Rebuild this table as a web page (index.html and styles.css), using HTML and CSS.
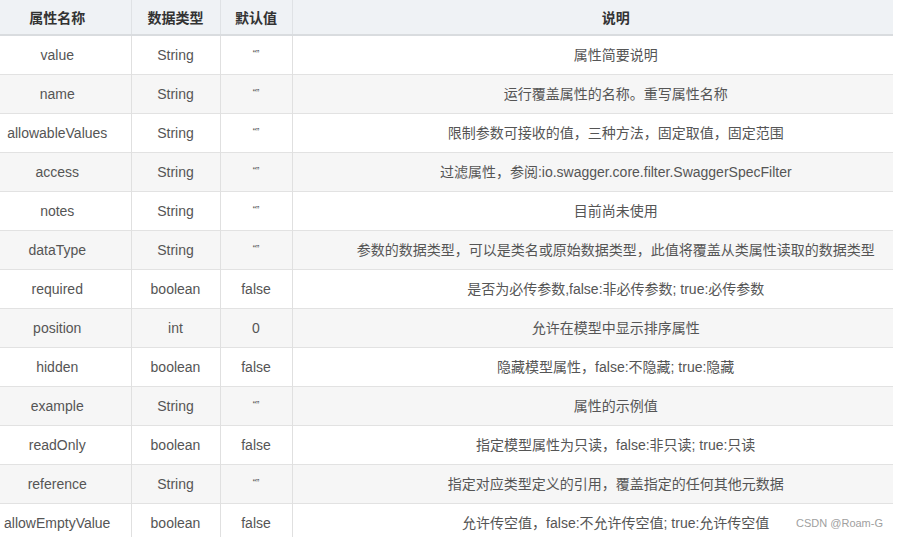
FILE: index.html
```html
<!DOCTYPE html>
<html lang="zh-CN">
<head>
<meta charset="utf-8">
<title>ApiModelProperty</title>
<link rel="stylesheet" href="styles.css">
</head>
<body>
<div class="page">
  <table class="props">
    <colgroup>
      <col class="c-name">
      <col class="c-type">
      <col class="c-def">
      <col class="c-desc">
    </colgroup>
    <thead>
      <tr>
        <th class="name">属性名称</th>
        <th>数据类型</th>
        <th>默认值</th>
        <th class="desc">说明</th>
      </tr>
    </thead>
    <tbody>
      <tr><td class="name">value</td><td>String</td><td class="q">“”</td><td class="desc">属性简要说明</td></tr>
      <tr><td class="name">name</td><td>String</td><td class="q">“”</td><td class="desc">运行覆盖属性的名称。重写属性名称</td></tr>
      <tr><td class="name">allowableValues</td><td>String</td><td class="q">“”</td><td class="desc">限制参数可接收的值，三种方法，固定取值，固定范围</td></tr>
      <tr><td class="name">access</td><td>String</td><td class="q">“”</td><td class="desc">过滤属性，参阅:io.swagger.core.filter.SwaggerSpecFilter</td></tr>
      <tr><td class="name">notes</td><td>String</td><td class="q">“”</td><td class="desc">目前尚未使用</td></tr>
      <tr><td class="name">dataType</td><td>String</td><td class="q">“”</td><td class="desc">参数的数据类型，可以是类名或原始数据类型，此值将覆盖从类属性读取的数据类型</td></tr>
      <tr><td class="name">required</td><td>boolean</td><td>false</td><td class="desc">是否为必传参数,false:非必传参数; true:必传参数</td></tr>
      <tr><td class="name">position</td><td>int</td><td>0</td><td class="desc">允许在模型中显示排序属性</td></tr>
      <tr><td class="name">hidden</td><td>boolean</td><td>false</td><td class="desc">隐藏模型属性，false:不隐藏; true:隐藏</td></tr>
      <tr><td class="name">example</td><td>String</td><td class="q">“”</td><td class="desc">属性的示例值</td></tr>
      <tr><td class="name">readOnly</td><td>boolean</td><td>false</td><td class="desc">指定模型属性为只读，false:非只读; true:只读</td></tr>
      <tr><td class="name">reference</td><td>String</td><td class="q">“”</td><td class="desc">指定对应类型定义的引用，覆盖指定的任何其他元数据</td></tr>
      <tr><td class="name">allowEmptyValue</td><td>boolean</td><td>false</td><td class="desc">允许传空值，false:不允许传空值; true:允许传空值</td></tr>
    </tbody>
  </table>
  <div class="watermark">CSDN @Roam-G</div>
</div>
</body>
</html>
```

FILE: styles.css
```css
html, body {
  margin: 0;
  padding: 0;
  background: #ffffff;
  overflow: hidden;
}

.page {
  position: relative;
  width: 898px;
  height: 537px;
  overflow: hidden;
}

.props {
  width: 893px;
  border-collapse: collapse;
  table-layout: fixed;
  font-family: "Liberation Sans", Arial, "Noto Sans CJK SC", sans-serif;
  font-size: 14px;
  color: #555555;
}

.c-name { width: 131px; }
.c-type { width: 89px; }
.c-def { width: 72px; }
.c-desc { width: 601px; }

.props th {
  height: 34px;
  padding: 0;
  background: #eff2f5;
  color: #333333;
  font-weight: bold;
  text-align: center;
  border-left: 1px solid #dfe2e5;
  border-bottom: 2px solid #d9dcdf;
}

.props td {
  height: 38px;
  padding: 0;
  line-height: 20px;
  text-align: center;
  border-left: 1px solid #e0e0e0;
  border-top: 1px solid #e2e2e2;
  white-space: nowrap;
}

.props th:first-child,
.props td:first-child {
  border-left: none;
}

.props tbody tr:nth-child(even) td {
  background: #f6f6f6;
}

.props .name {
  padding-right: 16px;
}

.props .desc {
  padding-left: 46px;
}

.props td.q {
  font-size: 10px;
  line-height: 14px;
}

.watermark {
  position: absolute;
  right: 15px;
  bottom: 8px;
  font-family: "Liberation Sans", Arial, sans-serif;
  font-size: 11px;
  color: #a0a0a0;
}
```
